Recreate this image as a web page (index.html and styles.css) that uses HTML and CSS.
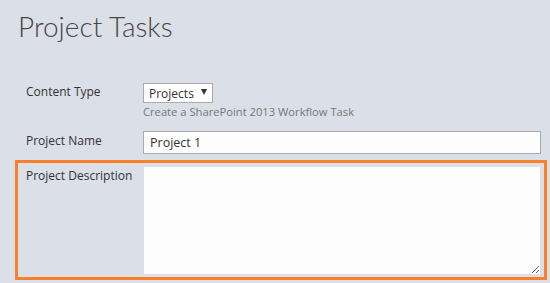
FILE: index.html
```html
<!DOCTYPE html>
<html lang="en">
<head>
<meta charset="utf-8">
<title>Project Tasks</title>
<link rel="stylesheet" href="styles.css">
</head>
<body>
<div class="page">
  <h1 class="title">Project Tasks</h1>
  <div class="form">
    <div class="row">
      <div class="label">Content Type</div>
      <div class="control">
        <div class="select">
          <span class="select-text">Projects</span>
          <svg class="arrow" width="6" height="6" viewBox="0 0 6 6"><polygon points="0,0 6,0 3,6" fill="#333"/></svg>
        </div>
        <div class="hint">Create a SharePoint 2013 Workflow Task</div>
      </div>
    </div>
    <div class="row">
      <div class="label label-name">Project Name</div>
      <div class="control">
        <input class="text-input" type="text" value="Project 1">
      </div>
    </div>
    <div class="row row-highlight">
      <div class="label">Project Description</div>
      <div class="control">
        <textarea class="textarea"></textarea>
      </div>
    </div>
  </div>
</div>
</body>
</html>
```

FILE: styles.css
```css
html, body {
  margin: 0;
  padding: 0;
}
body {
  background: #dbdfe8;
  font-family: "Open Sans", "Noto Sans", "Liberation Sans", sans-serif;
  color: #444;
  width: 550px;
  height: 283px;
  overflow: hidden;
}
.page {
  padding: 0 3px 0 15px;
}
.title {
  margin: 0;
  padding: 6px 0 0 3px;
  font-family: Lato, "Open Sans", sans-serif;
  font-weight: 300;
  font-size: 28px;
  line-height: 40px;
  color: #4a4444;
}
.form {
  margin-top: 31px;
}
.row {
  display: grid;
  grid-template-columns: 117px 1fr;
  border: 3px solid transparent;
  padding: 3px 3px 3px 8px;
}
.row-highlight {
  border-color: #fd7f2a;
  padding: 4px 3px 3px 8px;
}
.label {
  font-size: 12px;
  line-height: 18px;
  color: #333;
}
.label-name {
  padding-top: 1px;
}
.control {
  display: flex;
  flex-direction: column;
  align-items: flex-start;
}
.select {
  box-sizing: border-box;
  height: 20px;
  width: 70px;
  border: 1px solid #ababab;
  background: #fdfdfd;
  display: flex;
  align-items: center;
  padding: 0 5px;
  gap: 7px;
  font-size: 12px;
  color: #333;
  white-space: nowrap;
}
.arrow {
  display: block;
  flex-shrink: 0;
  margin-top: -3px;
}
.hint {
  font-size: 11.2px;
  line-height: 15px;
  color: #777;
  padding-top: 1px;
}
.text-input {
  box-sizing: border-box;
  width: 100%;
  height: 23px;
  margin: 0;
  border: 1px solid #ababab;
  background: #fdfdfd;
  padding: 0 6px;
  font-family: inherit;
  font-size: 12.5px;
  color: #333;
  outline: none;
}
.textarea {
  box-sizing: border-box;
  width: calc(100% - 2px);
  height: 107px;
  margin: 0 1px;
  border: none;
  background: #fdfdfd;
  font-family: inherit;
  font-size: 12.5px;
  outline: none;
  display: block;
}
```
